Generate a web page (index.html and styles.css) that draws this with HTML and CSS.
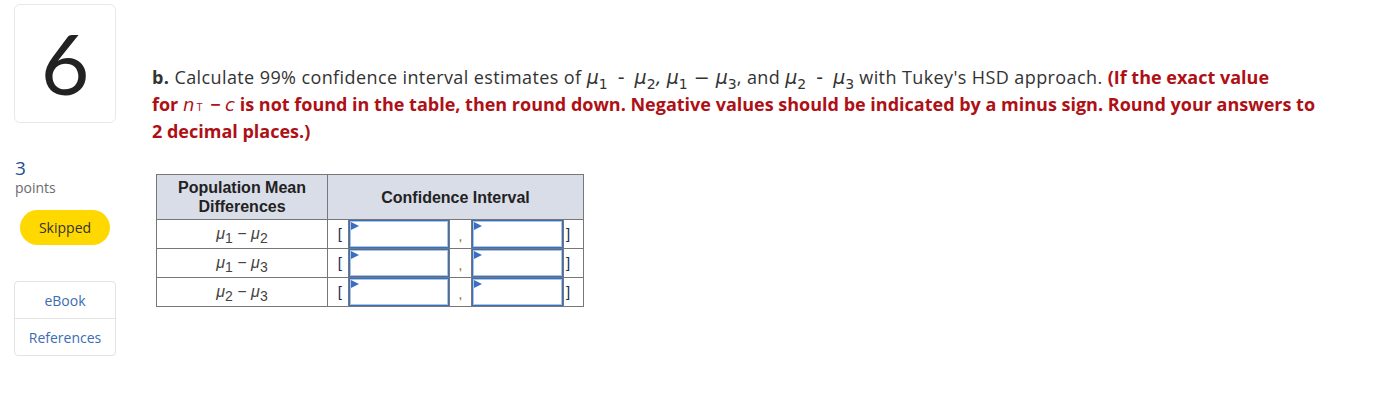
FILE: index.html
```html
<!DOCTYPE html>
<html lang="en">
<head>
  <meta charset="UTF-8">
  <title>Question 6</title>
  <link rel="stylesheet" href="styles.css">
</head>
<body>
  <div class="page">
    <aside class="sidebar">
      <div class="question-number">6</div>
      <div class="points">
        <div class="points-value">3</div>
        <div class="points-label">points</div>
      </div>
      <div class="status-pill">Skipped</div>
      <div class="resources">
        <a href="#">eBook</a>
        <a href="#">References</a>
      </div>
    </aside>

    <main class="question">
      <p class="prompt">
        <b>b.</b> Calculate 99% confidence interval estimates of
        <span class="math">&mu;<sub>1</sub> <span class="op">-</span> &mu;<sub>2</sub>,</span>
        <span class="math">&mu;<sub>1</sub> &minus; &mu;<sub>3</sub></span>, and
        <span class="math">&mu;<sub>2</sub> <span class="op">-</span> &mu;<sub>3</sub></span> with Tukey's HSD approach.
        <span class="note">(If the exact value<br>for <i>n</i><span class="small">T</span> &minus; <i>c</i> is not found in the table, then round down. Negative values should be indicated by a minus sign. Round your answers to 2 decimal places.)</span>
      </p>

      <table class="answer-table">
        <thead>
          <tr>
            <th class="label-col">Population Mean<br>Differences</th>
            <th colspan="5">Confidence Interval</th>
          </tr>
        </thead>
        <tbody>
          <tr>
            <td class="label-col"><span class="mu">&mu;<sub>1</sub> &minus; &mu;<sub>2</sub></span></td>
            <td class="bracket open">[</td>
            <td class="field"><span class="input-wrap"><input type="text"></span></td>
            <td class="comma">,</td>
            <td class="field"><span class="input-wrap"><input type="text"></span></td>
            <td class="bracket close">]</td>
          </tr>
          <tr>
            <td class="label-col"><span class="mu">&mu;<sub>1</sub> &minus; &mu;<sub>3</sub></span></td>
            <td class="bracket open">[</td>
            <td class="field"><span class="input-wrap"><input type="text"></span></td>
            <td class="comma">,</td>
            <td class="field"><span class="input-wrap"><input type="text"></span></td>
            <td class="bracket close">]</td>
          </tr>
          <tr>
            <td class="label-col"><span class="mu">&mu;<sub>2</sub> &minus; &mu;<sub>3</sub></span></td>
            <td class="bracket open">[</td>
            <td class="field"><span class="input-wrap"><input type="text"></span></td>
            <td class="comma">,</td>
            <td class="field"><span class="input-wrap"><input type="text"></span></td>
            <td class="bracket close">]</td>
          </tr>
        </tbody>
      </table>
    </main>
  </div>
</body>
</html>
```

FILE: styles.css
```css
body {
  margin: 0;
  padding: 0;
  font-family: "Open Sans", Lato, Arial, sans-serif;
  color: #333;
  background-color: #fff;
}
.page {
  display: flex;
  gap: 36px;
  padding: 4px 14px;
}
.sidebar {
  width: 102px;
  flex-shrink: 0;
  display: flex;
  flex-direction: column;
}
.question-number {
  height: 115px;
  border: 1px solid #e8e8e8;
  border-radius: 6px;
  display: flex;
  align-items: center;
  justify-content: center;
  font-family: Lato, sans-serif;
  font-size: 84px;
  color: #222;
  line-height: 1;
  padding-bottom: 2px;
  box-sizing: content-box;
}
.points {
  margin-top: 34px;
  padding-left: 1px;
}
.points-value {
  font-size: 19px;
  line-height: 22px;
  color: #1f4f8f;
}
.points-label {
  font-size: 14px;
  line-height: 18px;
  color: #6b6b6b;
}
.status-pill {
  margin: 13px 0 0 6px;
  width: 90px;
  height: 35px;
  border-radius: 18px;
  background-color: #ffd800;
  color: #333;
  font-size: 14px;
  display: flex;
  align-items: center;
  justify-content: center;
}
.resources {
  margin-top: 36px;
  border: 1px solid #e3e3e3;
  border-radius: 4px;
  display: flex;
  flex-direction: column;
}
.resources a {
  height: 36px;
  display: flex;
  align-items: center;
  justify-content: center;
  text-decoration: none;
  color: #3b6db3;
  font-size: 14px;
}
.resources a + a {
  border-top: 1px solid #e3e3e3;
}
.question {
  padding-top: 60px;
  flex: 1;
}
.prompt {
  margin: 0;
  max-width: 1168px;
  font-size: 18px;
  line-height: 27px;
  letter-spacing: 0.4px;
}
.prompt sub {
  line-height: 0;
}
.prompt b {
  font-weight: 700;
}
.math {
  font-family: "DejaVu Sans", Arial, sans-serif;
  font-style: italic;
  font-size: 19px;
  letter-spacing: 0;
  color: #333;
}
.math sub {
  font-style: normal;
  font-size: 14px;
}
.math .op {
  font-style: normal;
  padding: 0 4px;
}
.note {
  color: #ae1016;
  font-weight: 700;
  font-size: 18px;
  letter-spacing: 0;
}
.note i {
  font-family: "DejaVu Sans", Arial, sans-serif;
  font-weight: 400;
  line-height: 1;
}
.note .small {
  font-size: 11px;
  font-weight: 400;
  line-height: 1;
  margin: 0 3px 0 2px;
}
.answer-table {
  margin: 29px 0 0 4px;
  border-collapse: collapse;
  border: 1px solid #777;
  font-family: "Liberation Sans", Arial, sans-serif;
}
.answer-table th {
  background-color: #d9dde8;
  color: #222;
  font-size: 16px;
  font-weight: 700;
  line-height: 19px;
  height: 44px;
  padding: 0;
  border: 1px solid #777;
}
.answer-table th.label-col {
  width: 170px;
}
.answer-table th[colspan] {
  width: 254px;
}
.answer-table td {
  height: 28px;
  padding: 0;
  line-height: 16px;
  border-top: 1px solid #777;
  border-bottom: 1px solid #777;
}
.answer-table td.label-col {
  text-align: center;
  border-right: 1px solid #777;
}
.mu {
  font-style: italic;
  font-size: 16px;
  color: #444;
}
.mu sub {
  font-style: normal;
  font-size: 14px;
  line-height: 0;
}
.bracket {
  font-size: 15px;
  color: #1b2a52;
}
.bracket.open {
  text-align: right;
  padding-right: 6px !important;
  width: 14px;
}
.bracket.close {
  text-align: left;
  padding-left: 2px !important;
  width: 17px;
}
.comma {
  width: 21px;
  text-align: center;
  font-size: 10px;
  font-weight: 700;
  line-height: 20px !important;
  color: #9a7630;
  vertical-align: bottom;
}
.answer-table td.field {
  border: 1px solid #777;
}
.input-wrap {
  position: relative;
  display: block;
}
.input-wrap::before {
  content: "";
  position: absolute;
  left: 2px;
  top: 2px;
  border-left: 8px solid #3a6fc0;
  border-top: 4px solid transparent;
  border-bottom: 4px solid transparent;
}
.input-wrap input {
  display: block;
  box-sizing: border-box;
  width: 100px;
  height: 28px;
  margin: 0;
  border: 1px solid #3d70b7;
  box-shadow: inset 0 0 0 1px #a9c5ec;
  padding: 0 4px;
  font-size: 14px;
  outline: none;
}
.answer-table tr td:nth-child(5) .input-wrap input {
  width: 91px;
}
```
